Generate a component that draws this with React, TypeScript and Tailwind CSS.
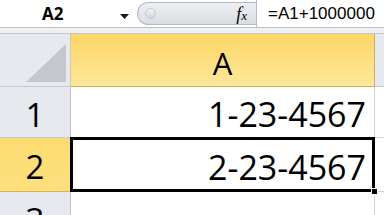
// Excel-style name box + formula bar with a zoomed-in grid below

const cellFont = { fontFamily: '"Open Sans", "Liberation Sans", sans-serif' }

function NameBox() {
  return (
    <div className="relative flex w-[137px] items-center bg-white">
      <span className="ml-[42px] text-[17px] font-bold leading-none text-black" style={cellFont}>
        A2
      </span>
      <svg className="absolute left-[120px] top-[14px]" width="9" height="5" viewBox="0 0 9 5">
        <path d="M0 0h9L4.5 5z" fill="#1a1a1a" />
      </svg>
    </div>
  )
}

function FormulaBar() {
  return (
    <div className="flex h-[28px] border-b border-[#b9bec6] bg-white">
      <NameBox />
      <div className="my-[2px] flex w-[119px] items-center rounded-l-full border border-r-0 border-[#b3b9c2] bg-gradient-to-b from-[#eef0f3] to-[#d9dde3]">
        <div className="ml-[7px] h-[11px] w-[11px] rounded-full border border-[#c2c7ce] bg-gradient-to-b from-[#f4f5f7] to-[#d0d4da]" />
        <span
          className="ml-auto mr-[9px] text-[18px] italic leading-none text-black"
          style={{ fontFamily: '"Liberation Serif", serif' }}
        >
          f<span className="text-[13px]">x</span>
        </span>
      </div>
      <div className="flex flex-1 items-center border-l border-[#b3b9c2] bg-white pl-[11px]">
        <span className="text-[17px] leading-none text-black" style={{ fontFamily: '"Liberation Sans", sans-serif' }}>
          =A1+1000000
        </span>
      </div>
    </div>
  )
}

function RowHeader({ n, active, h }: { n: number; active?: boolean; h: string }) {
  return (
    <div
      className={
        active
          ? `flex ${h} items-center justify-center border-b border-r border-[#d7b45a] bg-gradient-to-b from-[#fcdc72] to-[#fde07c] pt-[4px] text-[33px] leading-none text-black`
          : `flex ${h} items-center justify-center border-b border-r border-[#c5c9cf] bg-[#e6e9ed] pt-[4px] text-[33px] leading-none text-black`
      }
      style={cellFont}
    >
      {n}
    </div>
  )
}

export default function App() {
  return (
    <div className="h-[215px] w-[384px] overflow-hidden bg-white">
      <FormulaBar />
      <div className="h-[6px] border-b border-[#c3c7cd] bg-[#eef0f2]" />
      <div className="grid grid-cols-[71px_304px_1fr]">
        {/* header row */}
        <div className="relative h-[53px] border-b border-r border-[#c5c9cf] bg-[#e6e9ed]">
          <svg className="absolute left-[26px] top-[10px]" width="40" height="38" viewBox="0 0 40 38">
            <path d="M40 0V38H0z" fill="#c4c8cd" />
          </svg>
        </div>
        <div
          className="flex h-[53px] items-center justify-center border-b border-r border-[#d3ad52] bg-gradient-to-b from-[#fcd663] to-[#fde89a] pt-[6px] text-[31px] leading-none text-black"
          style={cellFont}
        >
          A
        </div>
        <div className="h-[53px] border-b border-[#c5c9cf] bg-[#e6e9ed]" />

        {/* row 1 */}
        <RowHeader n={1} h="h-[51px]" />
        <div
          className="flex h-[51px] items-center justify-end border-b border-r border-[#d4d4d4] pr-[8px] pt-[4px] text-[34px] leading-none text-black"
          style={cellFont}
        >
          1-23-4567
        </div>
        <div className="h-[51px] border-b border-[#d4d4d4]" />

        {/* row 2, selected */}
        <RowHeader n={2} active h="h-[54px]" />
        <div
          className="relative flex h-[54px] items-center justify-end border-b border-r border-[#d4d4d4] pr-[8px] pt-[4px] text-[34px] leading-none text-black"
          style={cellFont}
        >
          2-23-4567
          <div className="absolute inset-[-1px] border-[3px] border-black" />
          <div className="absolute bottom-[-4px] right-[-4px] h-[7px] w-[7px] border border-white bg-black" />
        </div>
        <div className="h-[54px] border-b border-[#d4d4d4]" />

        {/* row 3 */}
        <RowHeader n={3} h="h-[52px]" />
        <div className="h-[52px] border-r border-[#d4d4d4]" />
        <div className="h-[52px]" />
      </div>
    </div>
  )
}
